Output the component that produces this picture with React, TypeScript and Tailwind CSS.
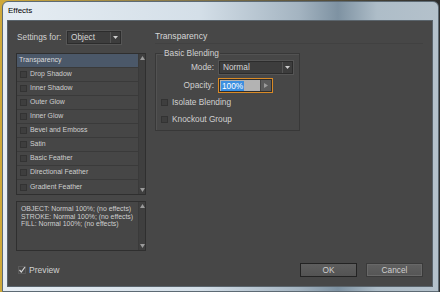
import React from "react";

const effects = [
  "Drop Shadow",
  "Inner Shadow",
  "Outer Glow",
  "Inner Glow",
  "Bevel and Emboss",
  "Satin",
  "Basic Feather",
  "Directional Feather",
  "Gradient Feather",
];

function Arrow({ dir }: { dir: "up" | "down" | "right" }) {
  const pts =
    dir === "up" ? "0,4 2.5,0 5,4" : dir === "down" ? "0,0 5,0 2.5,4" : "0,0 4,2.5 0,5";
  return (
    <svg width={dir === "right" ? 4 : 5} height={dir === "right" ? 5 : 4} viewBox={dir === "right" ? "0 0 4 5" : "0 0 5 4"}>
      <polygon points={pts} fill="#9a9a9a" />
    </svg>
  );
}

function ScrollBar() {
  return (
    <div className="flex w-[7px] flex-col items-center justify-between border-l border-[#3a3a3a] bg-[#3f3f3f] py-[2px]">
      <Arrow dir="up" />
      <Arrow dir="down" />
    </div>
  );
}

function Box() {
  return <span className="inline-block h-[7px] w-[7px] shrink-0 border border-[#333] bg-[#3e3e3e]" />;
}

function Dropdown({ label, w }: { label: string; w: string }) {
  return (
    <div className={`flex h-[13px] items-center border border-[#2c2c2c] bg-[#3d3d3d] shadow-[0_0_0_1px_#555] ${w}`}>
      <span className="flex-1 pl-[3px] text-[8.3px] text-[#d6d6d6]">{label}</span>
      <span className="flex h-full w-[10px] items-center justify-center border-l border-[#555]">
        <svg width="5" height="3" viewBox="0 0 5 3">
          <polygon points="0,0 5,0 2.5,3" fill="#cfcfcf" />
        </svg>
      </span>
    </div>
  );
}

export default function App() {
  return (
    <div className="h-[292px] w-[440px] overflow-hidden bg-[linear-gradient(90deg,#cfa93a_0%,#8a7a4a_40%,#2e2e2e_100%)] pt-[1px] pl-[2px] font-['Liberation_Sans',Arial,sans-serif]">
      <div className="h-[291px] w-[437px] rounded-t-[6px] border border-[#5d6a74] bg-[linear-gradient(90deg,#e6edf3_0%,#d4dfe8_45%,#a4b4c1_68%,#7e92a2_77%,#aebdc8_86%,#b4c1cb_100%)] px-[4px]">
        <div className="flex h-[18px] items-center pl-[1px] text-[8px] text-black">Effects</div>
        <div className="flex h-[267px] w-[426px] flex-col border border-[#5a646c] bg-[#474747] pt-[9px] pr-[9px] pl-[8px] text-[#d0d0d0]">
          <div className="flex gap-[9px]">
            {/* left column */}
            <div className="flex w-[130px] flex-col">
              <div className="flex h-[14px] items-center">
                <span className="w-[51px] pl-[1px] text-[8.3px]">Settings for:</span>
                <Dropdown label="Object" w="w-[54px]" />
              </div>
              <div className="mt-[9px] flex h-[142px] border border-[#2f2f2f] bg-[#464646]">
                <div className="flex flex-1 flex-col">
                  <div className="flex h-[14px] items-center border-b border-[#3a3a3a] bg-[#4b5869] pl-[2px] text-[7px] text-[#dcdcdc]">
                    Transparency
                  </div>
                  {effects.map((e) => (
                    <div key={e} className="flex h-[14px] items-center gap-[3px] border-b border-[#3a3a3a] pl-[3px] text-[6.9px] text-[#cfcfcf] last:border-b-0">
                      <Box />
                      <span>{e}</span>
                    </div>
                  ))}
                </div>
                <ScrollBar />
              </div>
              <div className="mt-[6px] flex h-[50px] border border-[#2f2f2f] bg-[#464646]">
                <div className="flex-1 pt-[3px] pl-[4px] text-[6.9px] leading-[7.5px] text-[#cfcfcf]">
                  <div>OBJECT: Normal 100%; (no effects)</div>
                  <div>STROKE: Normal 100%; (no effects)</div>
                  <div>FILL: Normal 100%; (no effects)</div>
                </div>
                <ScrollBar />
              </div>
            </div>
            {/* right column */}
            <div className="flex w-[268px] flex-col">
              <div className="flex h-[14px] items-center border-b border-[#414141] text-[8.6px] text-[#d6d6d6]">Transparency</div>
              <div className="relative mt-[9px] h-[78px] w-[145px] border border-[#383838] shadow-[inset_1px_1px_0_#525252]">
                <span className="absolute top-[-6px] left-[7px] bg-[#474747] px-[1px] text-[8.3px] leading-[10px] text-[#d0d0d0]">
                  Basic Blending
                </span>
                <div className="grid grid-cols-[58px_auto] items-center gap-x-[5px] gap-y-[4px] pt-[7px]">
                  <span className="text-right text-[8.3px]">Mode:</span>
                  <Dropdown label="Normal" w="w-[74px]" />
                  <span className="text-right text-[8.3px]">Opacity:</span>
                  <div className="ml-[-1px] flex h-[15px] w-[55px] border border-[#d98a26] bg-[#2d2d2d] p-[1px]">
                    <div className="flex flex-1 items-center bg-[#b3b3b3] pl-[1px]">
                      <span className="bg-[#3c8fe0] px-[1px] text-[8.3px] leading-[10px] text-white">100%</span>
                    </div>
                    <div className="flex w-[11px] items-center justify-center border-l border-[#444] bg-[#5c5c5c]">
                      <Arrow dir="right" />
                    </div>
                  </div>
                </div>
                <div className="mt-[4px] flex h-[10px] items-center gap-[4px] pl-[5px] text-[8.3px]">
                  <Box />
                  <span>Isolate Blending</span>
                </div>
                <div className="mt-[7px] flex h-[10px] items-center gap-[4px] pl-[5px] text-[8.3px]">
                  <Box />
                  <span>Knockout Group</span>
                </div>
              </div>
            </div>
          </div>
          {/* bottom row */}
          <div className="mt-[12px] flex h-[14px] items-center">
            <div className="ml-[2px] flex items-center gap-[3px] text-[8.6px]">
              <svg width="8" height="8" viewBox="0 0 8 8">
                <rect x="0.5" y="0.5" width="7" height="7" fill="none" stroke="#5a5a5a" />
                <path d="M1.5 4 L3.3 6 L7 1" fill="none" stroke="#d4d4d4" strokeWidth="1.2" />
              </svg>
              <span>Preview</span>
            </div>
            <div className="ml-auto flex gap-[9px]">
              <button className="flex h-[14px] w-[57px] items-center justify-center border border-[#232323] bg-[linear-gradient(#5e5e5e,#535353)] text-[8.3px] text-[#cfcfcf]">
                OK
              </button>
              <button className="flex h-[14px] w-[57px] items-center justify-center border border-[#3a3a3a] bg-[linear-gradient(#606060,#555)] text-[8.3px] text-[#cfcfcf] shadow-[inset_0_0_0_1px_#686868]">
                Cancel
              </button>
            </div>
          </div>
        </div>
      </div>
    </div>
  );
}
